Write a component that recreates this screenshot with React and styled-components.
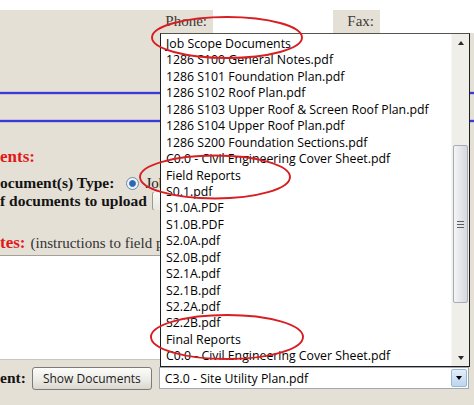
import React from "react";
import styled, { createGlobalStyle } from "styled-components";

const BEIGE = "#e4e0d6";

const GlobalStyle = createGlobalStyle`
  html, body {
    margin: 0;
    padding: 0;
    background: ${BEIGE};
  }
  body {
    width: 474px;
    height: 405px;
    overflow: hidden;
  }
`;

const Page = styled.div`
  position: relative;
  width: 474px;
  height: 405px;
  overflow: hidden;
  background: ${BEIGE};
  font-family: "Liberation Serif", "Times New Roman", serif;
`;

/* ---------- contact header ---------- */
const TopStrip = styled.div`
  height: 10px;
  background: #fff;
`;

const HeaderRow = styled.div`
  display: flex;
  height: 23px;
`;

const HeaderLabel = styled.div`
  flex: 0 0 ${(p) => p.$w}px;
  box-sizing: border-box;
  padding: 2px 6px 0 0;
  text-align: right;
  background: ${BEIGE};
  color: #3c3a36;
  font-size: 15px;
  line-height: 18px;
`;

const HeaderField = styled.div`
  flex: ${(p) => (p.$w ? `0 0 ${p.$w}px` : "1")};
  background: #fff;
`;

/* ---------- form body ---------- */
const Form = styled.div`
  display: flex;
  flex-direction: column;
`;

const Rule = styled.div`
  height: 2px;
  margin-top: ${(p) => p.$gap}px;
  background: #3a3ad4;
  box-shadow: 0 0 0 0.5px rgba(90, 90, 230, 0.45);
`;

const SectionTitle = styled.div`
  margin-top: ${(p) => p.$gap}px;
  height: 20px;
  line-height: 20px;
  color: #e01818;
  font-weight: bold;
  font-size: 17px;
  white-space: nowrap;
`;

/* rows that run beneath the open list are cut off at its left edge */
const FieldRow = styled.div`
  display: flex;
  align-items: center;
  height: ${(p) => p.$h || 18}px;
  margin-top: ${(p) => p.$gap || 0}px;
  white-space: nowrap;
  ${(p) => (p.$clip ? "width: 160px; overflow: hidden;" : "")}
`;

const FieldLabel = styled.span`
  font-weight: bold;
  font-size: 15.5px;
  color: #141414;
`;

const Radio = styled.span`
  flex: 0 0 auto;
  width: 11px;
  height: 11px;
  margin-left: 12px;
  border-radius: 50%;
  border: 1px solid #6f8aa8;
  background: radial-gradient(circle, #2a68b4 0 2.6px, #5b8fc8 3.2px, #eef2f6 3.8px);
`;

const Choice = styled.span`
  margin-left: 6px;
  font-size: 15px;
  color: #222;
`;

const CountSelect = styled.span`
  flex: 0 0 auto;
  width: 60px;
  height: 20px;
  margin-left: 5px;
  box-sizing: border-box;
  border: 1px solid #9a9890;
  border-radius: 3px;
  background: linear-gradient(#fafaf7, #e8e7e1);
`;

const Hint = styled.span`
  margin-left: 5px;
  font-size: 15px;
  color: #333;
`;

const NotesBox = styled.div`
  margin-top: 2px;
  width: 330px;
  height: 105px;
  box-sizing: border-box;
  background: #fff;
  border-top: 1px solid #a3a19a;
  border-bottom: 1px solid #c8c6be;
`;

const ActionButton = styled.button`
  flex: 0 0 auto;
  width: 120px;
  height: 23px;
  margin-left: 6px;
  padding: 0;
  border: 1px solid #7c7b76;
  border-radius: 3px;
  background: linear-gradient(#fcfcfa, #ecebe6 55%, #d9d7cf);
  font-family: "Open Sans", "Liberation Sans", sans-serif;
  font-size: 12px;
  color: #1c1c1c;
`;

const FileSelect = styled.div`
  flex: 0 0 310px;
  height: 22px;
  margin-left: 7px;
  box-sizing: border-box;
  display: flex;
  align-items: center;
  border: 1px solid #a2a8b0;
  background: #fff;
  font-family: "Open Sans", "Liberation Sans", sans-serif;
  font-size: 12.3px;
  color: #000;
`;

const SelectText = styled.span`
  flex: 1;
  padding-left: 5px;
`;

const DropButton = styled.span`
  flex: 0 0 16px;
  height: 18px;
  margin-right: 1px;
  box-sizing: border-box;
  display: flex;
  align-items: center;
  justify-content: center;
  border: 1px solid #9cb6d6;
  border-radius: 2px;
  background: linear-gradient(#e2eefb, #bdd5ef);
`;

const Arrow = styled.span`
  width: 0;
  height: 0;
  border-left: 3.5px solid transparent;
  border-right: 3.5px solid transparent;
  ${(p) =>
    p.$up
      ? `border-bottom: 4px solid ${p.$color || "#000"};`
      : `border-top: 4px solid ${p.$color || "#000"};`}
`;

/* ---------- open drop-down list ---------- */
const Popup = styled.div`
  position: absolute;
  left: 160px;
  top: 33px;
  width: 310px;
  height: 334px;
  box-sizing: border-box;
  display: flex;
  border: 1px solid #1e1e1e;
  border-top-color: #55534e;
  background: #fff;
`;

const OptionList = styled.ul`
  flex: 1;
  margin: 0;
  padding: 2px 0 0;
  list-style: none;
  overflow: hidden;
`;

const Option = styled.li`
  height: 16.45px;
  line-height: 16.45px;
  padding-left: 5px;
  font-family: "Open Sans", "Liberation Sans", sans-serif;
  font-size: 12.3px;
  color: #000;
  white-space: nowrap;
`;

const ScrollBar = styled.div`
  flex: 0 0 17px;
  display: flex;
  flex-direction: column;
  background: #efeee9;
  border-left: 1px solid #f6f6f3;
`;

const ScrollButton = styled.div`
  flex: 0 0 17px;
  display: flex;
  align-items: center;
  justify-content: center;
`;

const Track = styled.div`
  flex: 1;
`;

const Thumb = styled.div`
  height: ${(p) => p.$size}px;
  margin: ${(p) => p.$offset}px 1px 0;
  box-sizing: border-box;
  display: flex;
  flex-direction: column;
  align-items: center;
  justify-content: center;
  gap: 2px;
  border: 1px solid #a8abb4;
  border-radius: 2px;
  background: linear-gradient(to right, #f5f5f7, #e2e3e8 60%, #d6d8de);
`;

const Grip = styled.span`
  width: 7px;
  height: 1px;
  background: #5a5d66;
`;

const Annotations = styled.svg`
  position: absolute;
  left: 0;
  top: 0;
  pointer-events: none;
`;

const options = [
  "Job Scope Documents",
  "1286 S100 General Notes.pdf",
  "1286 S101 Foundation Plan.pdf",
  "1286 S102 Roof Plan.pdf",
  "1286 S103 Upper Roof & Screen Roof Plan.pdf",
  "1286 S104 Upper Roof Plan.pdf",
  "1286 S200 Foundation Sections.pdf",
  "C0.0 - Civil Engineering Cover Sheet.pdf",
  "Field Reports",
  "S0.1.pdf",
  "S1.0A.PDF",
  "S1.0B.PDF",
  "S2.0A.pdf",
  "S2.0B.pdf",
  "S2.1A.pdf",
  "S2.1B.pdf",
  "S2.2A.pdf",
  "S2.2B.pdf",
  "Final Reports",
  "C0.0 - Civil Engineering Cover Sheet.pdf",
];

const rings = [
  { cx: 227, cy: 37.5, rx: 75, ry: 20.5 },
  { cx: 215, cy: 177, rx: 75, ry: 21.5 },
  { cx: 227, cy: 337, rx: 76, ry: 22 },
];

export default function App() {
  return (
    <Page>
      <GlobalStyle />
      <TopStrip />
      <HeaderRow>
        <HeaderLabel $w={213}>Phone:</HeaderLabel>
        <HeaderField $w={120} />
        <HeaderLabel $w={47}>Fax:</HeaderLabel>
        <HeaderField />
      </HeaderRow>

      <Form>
        <Rule $gap={59} />
        <Rule $gap={26} />
        <SectionTitle $gap={25}>ents:</SectionTitle>
        <FieldRow $gap={7} $clip>
          <FieldLabel>ocument(s) Type:</FieldLabel>
          <Radio />
          <Choice>Job Scope Documents</Choice>
        </FieldRow>
        <FieldRow $clip>
          <FieldLabel>f documents to upload</FieldLabel>
          <CountSelect />
        </FieldRow>
        <FieldRow $gap={23} $h={20} $clip>
          <SectionTitle as="span" $gap={0}>tes:</SectionTitle>
          <Hint>(instructions to field personnel)</Hint>
        </FieldRow>
        <NotesBox />
        <FieldRow $gap={7} $h={22}>
          <FieldLabel>ent:</FieldLabel>
          <ActionButton>Show Documents</ActionButton>
          <FileSelect>
            <SelectText>C3.0 - Site Utility Plan.pdf</SelectText>
            <DropButton>
              <Arrow />
            </DropButton>
          </FileSelect>
        </FieldRow>
      </Form>

      <Popup>
        <OptionList>
          {options.map((o, i) => (
            <Option key={i}>{o}</Option>
          ))}
        </OptionList>
        <ScrollBar>
          <ScrollButton>
            <Arrow $up $color="#2a2a2a" />
          </ScrollButton>
          <Track>
            <Thumb $offset={94} $size={158}>
              <Grip />
              <Grip />
              <Grip />
            </Thumb>
          </Track>
          <ScrollButton>
            <Arrow $color="#2a2a2a" />
          </ScrollButton>
        </ScrollBar>
      </Popup>

      <Annotations width="474" height="405" viewBox="0 0 474 405">
        {rings.map((r, i) => (
          <ellipse
            key={i}
            cx={r.cx}
            cy={r.cy}
            rx={r.rx}
            ry={r.ry}
            fill="none"
            stroke="#d81e22"
            strokeWidth="1.9"
          />
        ))}
      </Annotations>
    </Page>
  );
}
